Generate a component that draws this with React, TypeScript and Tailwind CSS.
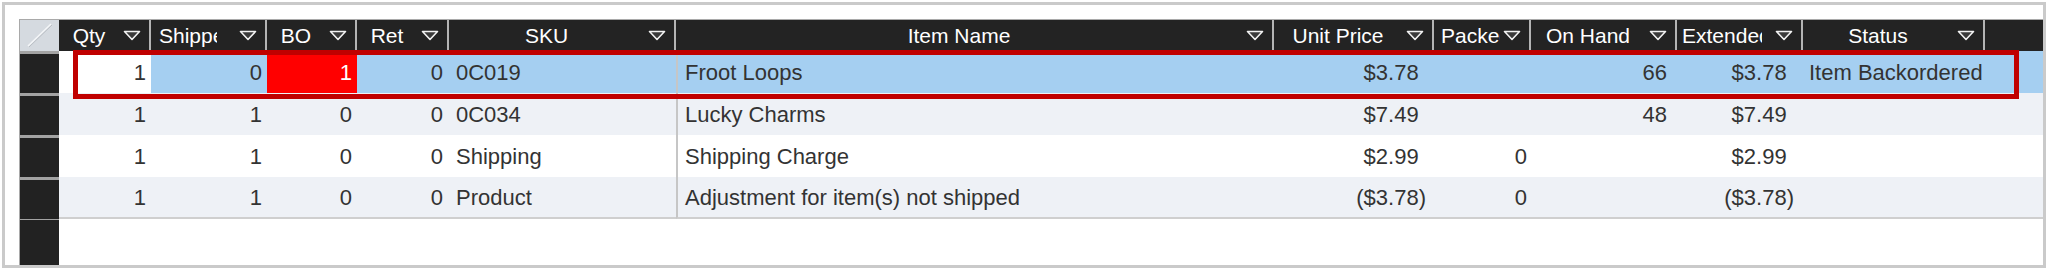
import React from "react";

type Col = {
  key: string;
  label: string;
  width: string;
  align: "left" | "right";
  pad: string;
  clip?: string;
  money?: boolean;
  divider?: boolean;
};

const columns: Col[] = [
  { key: "qty", label: "Qty", width: "w-[92px]", align: "right", pad: "pr-[5px]" },
  { key: "shipped", label: "Shipped", width: "w-[116px]", align: "right", pad: "pr-[5px]", clip: "w-[66px] pl-[8px]" },
  { key: "bo", label: "BO", width: "w-[90px]", align: "right", pad: "pr-[5px]" },
  { key: "ret", label: "Ret", width: "w-[92px]", align: "right", pad: "pr-[6px]" },
  { key: "sku", label: "SKU", width: "w-[227px]", align: "left", pad: "pl-[7px]" },
  { key: "item", label: "Item Name", width: "w-[598px]", align: "left", pad: "pl-[7px]", divider: true },
  { key: "unit", label: "Unit Price", width: "w-[160px]", align: "right", pad: "pr-[8px]", money: true },
  { key: "packed", label: "Packed", width: "w-[97px]", align: "right", pad: "pr-[4px]", clip: "w-[66px] pl-[7px]" },
  { key: "onhand", label: "On Hand", width: "w-[146px]", align: "right", pad: "pr-[10px]" },
  { key: "ext", label: "Extended", width: "w-[126px]", align: "right", pad: "pr-[9px]", money: true, clip: "w-[85px] pl-[5px]" },
  { key: "status", label: "Status", width: "w-[182px]", align: "left", pad: "pl-[6px]" },
];

const rows: Record<string, string>[] = [
  { qty: "1", shipped: "0", bo: "1", ret: "0", sku: "0C019", item: "Froot Loops", unit: "$3.78", packed: "", onhand: "66", ext: "$3.78", status: "Item Backordered" },
  { qty: "1", shipped: "1", bo: "0", ret: "0", sku: "0C034", item: "Lucky Charms", unit: "$7.49", packed: "", onhand: "48", ext: "$7.49", status: "" },
  { qty: "1", shipped: "1", bo: "0", ret: "0", sku: "Shipping", item: "Shipping Charge", unit: "$2.99", packed: "0", onhand: "", ext: "$2.99", status: "" },
  { qty: "1", shipped: "1", bo: "0", ret: "0", sku: "Product", item: "Adjustment for item(s) not shipped", unit: "($3.78)", packed: "0", onhand: "", ext: "($3.78)", status: "" },
];

function SortArrow() {
  return (
    <svg width="18" height="11" viewBox="0 0 18 11" className="shrink-0 ml-[4px] mr-[8px]">
      <polygon points="1.5,1.5 16.5,1.5 9,9.5" fill="#3a3a3a" stroke="#f2f2f2" strokeWidth="1.6" strokeLinejoin="round" />
    </svg>
  );
}

function HeaderCell({ col }: { col: Col }) {
  return (
    <div className={`${col.width} h-full shrink-0 flex items-center border-r-2 border-[#b4b4b4] overflow-hidden`}>
      {col.clip ? (
        <div className="flex-1 min-w-0">
          <div className={`${col.clip} overflow-hidden whitespace-nowrap`}>{col.label}</div>
        </div>
      ) : (
        <div className="flex-1 min-w-0 text-center whitespace-nowrap overflow-hidden">{col.label}</div>
      )}
      <SortArrow />
    </div>
  );
}

function CellValue({ col, value }: { col: Col; value: string }) {
  if (col.money && value && !value.startsWith("(")) {
    return (
      <span>
        {value}
        <span className="invisible">)</span>
      </span>
    );
  }
  return <span>{value}</span>;
}

export default function App() {
  return (
    <div className="w-[2048px] h-[270px] bg-white p-[2px] font-['Liberation_Sans',Arial,sans-serif]">
      <div className="h-full border-[3px] border-[#cacaca] bg-white pl-[14px] pt-[14px] flex flex-col">
        <div className="relative flex-1 flex flex-col border-l border-t border-[#a9a9a9]">
          {/* header */}
          <div className="flex h-[31px] text-[21px] text-white bg-[#232323]">
            <div className="w-[39px] h-full shrink-0 bg-[#d5dae0]">
              <svg width="39" height="31" viewBox="0 0 39 31">
                <line x1="8" y1="26" x2="31" y2="4" stroke="#f4f6f8" strokeWidth="1.5" />
                <line x1="9" y1="27" x2="32" y2="5" stroke="#b9bec4" strokeWidth="1" />
              </svg>
            </div>
            {columns.map((col) => (
              <HeaderCell key={col.key} col={col} />
            ))}
            <div className="flex-1" />
          </div>

          {/* rows */}
          {rows.map((row, i) => {
            const selected = i === 0;
            const rowBg = selected ? "bg-[#a5cff1]" : i % 2 === 1 ? "bg-[#eef1f6]" : "bg-white";
            const last = i === rows.length - 1;
            return (
              <div key={i} className="flex h-[42px] text-[22px] text-[#333]">
                <div className="w-[39px] shrink-0 bg-[#222] border-t-[3px] border-[#a3a3a3]" />
                {columns.map((col) => {
                  let bg = rowBg;
                  let color = "";
                  if (selected && col.key === "qty") bg = "bg-white";
                  if (selected && col.key === "bo") {
                    bg = "bg-[#ff0000]";
                    color = "text-white";
                  }
                  return (
                    <div
                      key={col.key}
                      className={`${col.width} shrink-0 flex items-center whitespace-nowrap overflow-hidden ${bg} ${color} ${col.pad} ${
                        col.align === "right" ? "justify-end" : "justify-start"
                      } ${col.divider ? "border-l-2 border-l-[#c6c6c6]" : ""} ${last ? "border-b-2 border-b-[#cfcfcf]" : ""}`}
                    >
                      <CellValue col={col} value={row[col.key]} />
                    </div>
                  );
                })}
                <div className={`flex-1 ${rowBg} ${last ? "border-b-2 border-b-[#cfcfcf]" : ""}`} />
              </div>
            );
          })}

          {/* empty space below rows */}
          <div className="flex flex-1">
            <div className="w-[39px] shrink-0 bg-[#222] border-t-[1px] border-[#a3a3a3]" />
            <div className="flex-1 bg-white" />
          </div>

          {/* highlight around the backordered line */}
          <div className="absolute left-[53px] top-[30px] w-[1946px] h-[49px] border-[5px] border-[#c00000] pointer-events-none" />
        </div>
      </div>
    </div>
  );
}
